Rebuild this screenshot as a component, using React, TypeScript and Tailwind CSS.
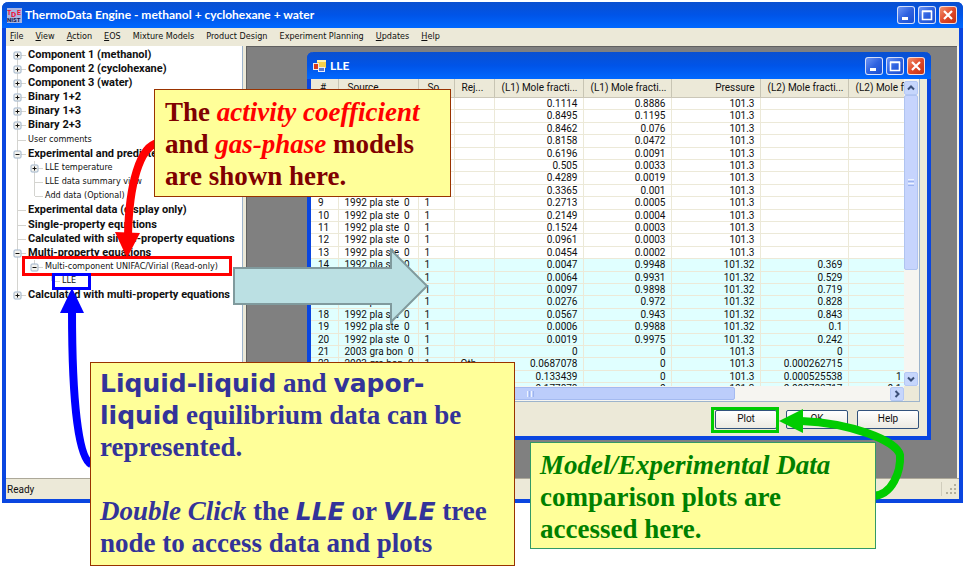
import { useState } from 'react';
import clsx from 'clsx';

interface TreeItem {
    label: string;
    level: number;
    bold?: boolean;
    box?: 'plus' | 'minus';
    lines: string[];
}

interface WindowButtonProps {
    type: 'minimize' | 'maximize' | 'close';
    label: string;
}

// one entry of "lines" per indent column: start, full, tee, end, none
const treeItems: TreeItem[] = [
    { label: 'Component 1 (methanol)', level: 0, bold: true, box: 'plus', lines: ['start'] },
    { label: 'Component 2 (cyclohexane)', level: 0, bold: true, box: 'plus', lines: ['tee'] },
    { label: 'Component 3 (water)', level: 0, bold: true, box: 'plus', lines: ['tee'] },
    { label: 'Binary 1+2', level: 0, bold: true, box: 'plus', lines: ['tee'] },
    { label: 'Binary 1+3', level: 0, bold: true, box: 'plus', lines: ['tee'] },
    { label: 'Binary 2+3', level: 0, bold: true, box: 'plus', lines: ['tee'] },
    { label: 'User comments', level: 0, lines: ['tee'] },
    { label: 'Experimental and predicted data', level: 0, bold: true, box: 'minus', lines: ['tee'] },
    { label: 'LLE temperature', level: 1, box: 'plus', lines: ['full', 'tee'] },
    { label: 'LLE data summary view', level: 1, lines: ['full', 'tee'] },
    { label: 'Add data (Optional)', level: 1, lines: ['full', 'end'] },
    { label: 'Experimental data (display only)', level: 0, bold: true, lines: ['tee'] },
    { label: 'Single-property equations', level: 0, bold: true, lines: ['tee'] },
    { label: 'Calculated with single-property equations', level: 0, bold: true, lines: ['tee'] },
    { label: 'Multi-property equations', level: 0, bold: true, box: 'minus', lines: ['tee'] },
    { label: 'Multi-component UNIFAC/Virial (Read-only)', level: 1, box: 'minus', lines: ['full', 'end'] },
    { label: 'LLE', level: 2, lines: ['full', 'none', 'end'] },
    { label: 'Calculated with multi-property equations', level: 0, bold: true, box: 'plus', lines: ['end'] },
];

const menuItems = [
    { key: 'F', rest: 'ile' },
    { key: 'V', rest: 'iew' },
    { key: 'A', rest: 'ction' },
    { key: 'E', rest: 'OS' },
    { key: '', rest: 'Mixture Models' },
    { key: '', rest: 'Product Design' },
    { key: '', rest: 'Experiment Planning' },
    { key: 'U', rest: 'pdates' },
    { key: 'H', rest: 'elp' },
];

// source, set, rejected, L1, L1, pressure, L2, L2
const rows = [
    ['1992 pla ste  0', '1', '', '0.1114', '0.8886', '101.3', '', ''],
    ['1992 pla ste  0', '1', '', '0.8495', '0.1195', '101.3', '', ''],
    ['1992 pla ste  0', '1', '', '0.8462', '0.076', '101.3', '', ''],
    ['1992 pla ste  0', '1', '', '0.8158', '0.0472', '101.3', '', ''],
    ['1992 pla ste  0', '1', '', '0.6196', '0.0091', '101.3', '', ''],
    ['1992 pla ste  0', '1', '', '0.505', '0.0033', '101.3', '', ''],
    ['1992 pla ste  0', '1', '', '0.4289', '0.0019', '101.3', '', ''],
    ['1992 pla ste  0', '1', '', '0.3365', '0.001', '101.3', '', ''],
    ['1992 pla ste  0', '1', '', '0.2713', '0.0005', '101.3', '', ''],
    ['1992 pla ste  0', '1', '', '0.2149', '0.0004', '101.3', '', ''],
    ['1992 pla ste  0', '1', '', '0.1524', '0.0003', '101.3', '', ''],
    ['1992 pla ste  0', '1', '', '0.0961', '0.0003', '101.3', '', ''],
    ['1992 pla ste  0', '1', '', '0.0454', '0.0002', '101.3', '', ''],
    ['1992 pla ste  0', '1', '', '0.0047', '0.9948', '101.32', '0.369', ''],
    ['1992 pla ste  0', '1', '', '0.0064', '0.9931', '101.32', '0.529', ''],
    ['1992 pla ste  0', '1', '', '0.0097', '0.9898', '101.32', '0.719', ''],
    ['1992 pla ste  0', '1', '', '0.0276', '0.972', '101.32', '0.828', ''],
    ['1992 pla ste  0', '1', '', '0.0567', '0.943', '101.32', '0.843', ''],
    ['1992 pla ste  0', '1', '', '0.0006', '0.9988', '101.32', '0.1', ''],
    ['1992 pla ste  0', '1', '', '0.0019', '0.9975', '101.32', '0.242', ''],
    ['2003 gra bon  0', '1', '', '0', '0', '101.3', '0', ''],
    ['2003 gra bon  0', '1', 'Oth...', '0.0687078', '0', '101.3', '0.000262715', ''],
    ['2003 gra bon  0', '1', 'Oth...', '0.133439', '0', '101.3', '0.000525538', '1'],
    ['2003 gra bon  0', '1', 'Oth...', '0.177878', '0', '101.3', '0.000788717', '0.1'],
];

const columns = [
    { title: '#', className: 'w-[27px] pl-[9px]' },
    { title: 'Source', className: 'w-20 pl-[9px]' },
    { title: 'So...', className: 'w-9 pl-[9px]' },
    { title: 'Rej...', className: 'w-10 pl-[7px]' },
    { title: '(L1) Mole fracti...', className: 'w-[89px] pl-[7px]' },
    { title: '(L1) Mole fracti...', className: 'w-[88px] pl-[7px]' },
    { title: 'Pressure', className: 'w-[89px] pr-[5px] text-right' },
    { title: '(L2) Mole fracti...', className: 'w-[88px] pl-[7px]' },
    { title: '(L2) Mole fracti...', className: 'w-[88px] pl-[7px]' },
];

function WindowButton({ type, label }: WindowButtonProps) {
    return (
        <button
            aria-label={label}
            className={clsx(
                'flex size-[18px] items-center justify-center rounded-[3px] border border-white/80',
                type === 'close'
                    ? 'bg-linear-to-br from-[#f0906c] via-[#e0492a] to-[#c43010]'
                    : 'bg-linear-to-br from-[#6d94f5] via-[#2f62e0] to-[#1a4ed0]'
            )}
        >
            <svg viewBox="0 0 16 16" className="size-4" fill="none" stroke="white">
                {type === 'minimize' && <path d="M4 11.5h6" strokeWidth="3" />}
                {type === 'maximize' && <path d="M3.5 4.5h9v8h-9zM3 4h10" strokeWidth="1.6" />}
                {type === 'close' && <path d="M4 4l8 8M12 4l-8 8" strokeWidth="2.2" />}
            </svg>
        </button>
    );
}

function WindowButtons() {
    return (
        <div className="flex gap-[3px]">
            <WindowButton type="minimize" label="Minimize" />
            <WindowButton type="maximize" label="Maximize" />
            <WindowButton type="close" label="Close" />
        </div>
    );
}

function TreeCell({ line, box }: { line: string; box?: 'plus' | 'minus' }) {
    return (
        <svg width="17" height="15" className="shrink-0 overflow-visible" fill="none">
            <g stroke="#d4d4d0" strokeWidth="1">
                {(line === 'full' || line === 'tee') && <path d="M8.5 0v15" />}
                {line === 'start' && <path d="M8.5 7v8" />}
                {line === 'end' && <path d="M8.5 0v7" />}
                {line !== 'full' && line !== 'none' && <path d="M9 7.5h8" />}
            </g>
            {box && (
                <>
                    <rect x="5" y="4" width="7" height="7" rx="1" fill="#f4f3ee" stroke="#9db2ca" />
                    <path d={box === 'plus' ? 'M6.5 7.5h4M8.5 5.5v4' : 'M6.5 7.5h4'} stroke="#101010" />
                </>
            )}
        </svg>
    );
}

function Tree() {
    return (
        <ul className="w-[237px] shrink-0 overflow-hidden border-r border-[#9db4cc] bg-white pt-0.5 pl-[3px]">
            {treeItems.map((item) => (
                <li
                    key={item.label}
                    className={clsx(
                        'flex h-[14px] items-center whitespace-nowrap text-[#101010] nth-[6n]:h-[15px]',
                        item.bold ? 'text-[11px] font-bold' : "font-['DejaVu_Sans_Condensed','Roboto',sans-serif] text-[9px]"
                    )}
                >
                    {item.lines.map((line, i) => (
                        <TreeCell key={i} line={line} box={i === item.level ? item.box : undefined} />
                    ))}
                    <span className="pl-0.5">{item.label}</span>
                </li>
            ))}
        </ul>
    );
}

function ScrollArrow({ d, label }: { d: string; label: string }) {
    return (
        <button
            aria-label={label}
            className="flex size-[14px] shrink-0 items-center justify-center rounded-[2px] border border-[#b4c8f4] bg-[#c6d6fc]"
        >
            <svg viewBox="0 0 10 10" className="size-[10px]" fill="none" stroke="#3c5078" strokeWidth="2">
                <path d={d} />
            </svg>
        </button>
    );
}

function DataTable() {
    return (
        <table className="w-[625px] table-fixed border-collapse text-[10px] leading-[11px] text-[#101010]">
            <thead>
                <tr className="h-[18px] bg-[#ece9d8]">
                    {columns.map((col, i) => (
                        <th
                            key={i}
                            className={clsx(
                                'overflow-hidden border-r border-b border-r-[#c8c5b4] border-b-[#cbc7b8] p-0 text-left font-normal whitespace-nowrap',
                                col.className
                            )}
                        >
                            {col.title}
                        </th>
                    ))}
                </tr>
            </thead>
            <tbody>
                {rows.map((row, i) => (
                    <tr
                        key={i}
                        className={clsx('h-3 nth-[5n+2]:h-[13px] nth-[5n+4]:h-[13px]', i < 13 ? 'bg-white' : 'bg-[#e0ffff]')}
                    >
                        <td className="border-r border-b border-[#ece9d8] p-0 pl-[7px]">{i + 1}</td>
                        {row.map((cell, j) => (
                            <td
                                key={j}
                                className={clsx(
                                    'overflow-hidden border-r border-b border-[#ece9d8] p-0 whitespace-pre',
                                    j < 3 && 'pl-[6px]',
                                    j >= 3 && j < 7 && 'pr-[5px] text-right',
                                    j === 7 && 'pr-[34px] text-right'
                                )}
                            >
                                {cell}
                            </td>
                        ))}
                    </tr>
                ))}
            </tbody>
        </table>
    );
}

function DialogButton({ label }: { label: string }) {
    return (
        <button className="h-[19px] w-[62px] rounded-[2px] border border-[#31527c] bg-linear-to-b from-white to-[#eceae2] text-[10px] leading-none text-[#101010]">
            {label}
        </button>
    );
}

function LleWindow({ onClose }: { onClose?: () => void }) {
    return (
        <section className="absolute top-[5px] left-[60px] flex h-[388px] w-[624px] flex-col rounded-t-md border-x-4 border-b-4 border-[#0a46e0] bg-[#ece9d8]">
            <header
                onDoubleClick={onClose}
                className="-mx-1 flex h-[27px] shrink-0 items-center rounded-t-md bg-linear-to-b from-[#0a50d0] via-[#0054e8] to-[#0068ff] pr-1.5 pl-1.5"
            >
                <svg viewBox="0 0 13 13" className="size-[13px]">
                    <rect x="4" y="1" width="9" height="8" fill="#f6d04c" />
                    <rect x="4" y="1" width="9" height="2" fill="#fdf0b0" />
                    <rect x="0" y="4" width="6" height="7" fill="#f0e8e8" />
                    <rect x="1" y="5" width="4" height="5" fill="#d43a1c" />
                    <rect x="5" y="8" width="7" height="5" fill="#e8ecf8" />
                    <rect x="6" y="9" width="5" height="3" fill="#5878d0" />
                </svg>
                <h2 className="flex-1 pl-1 font-['Lato',sans-serif] text-xs font-bold text-white">LLE</h2>
                <WindowButtons />
            </header>
            <div className="mr-[7px] flex min-h-0 flex-1 flex-col border-r border-b border-[#9db4cc]">
                <div className="flex min-h-0 flex-1">
                    <div className="min-w-0 flex-1 overflow-hidden bg-white">
                        <DataTable />
                    </div>
                    <div className="flex w-[15px] shrink-0 flex-col bg-[#f6f5f1] pt-0.5">
                        <ScrollArrow d="M2 6.5l3-3 3 3" label="Scroll up" />
                        <div className="flex h-[175px] w-[14px] flex-col items-center justify-center gap-px rounded-[2px] border border-[#b0c4f0] bg-[#c6d4fd]">
                            <i className="h-px w-1.5 bg-[#eef4fe]" />
                            <i className="h-px w-1.5 bg-[#9cb4ee]" />
                            <i className="h-px w-1.5 bg-[#eef4fe]" />
                            <i className="h-px w-1.5 bg-[#9cb4ee]" />
                        </div>
                        <div className="flex-1" />
                        <ScrollArrow d="M2 3.5l3 3 3-3" label="Scroll down" />
                    </div>
                </div>
                <div className="flex h-[15px] shrink-0 items-center bg-[#f6f5f1]">
                    <ScrollArrow d="M6.5 2l-3 3 3 3" label="Scroll left" />
                    <div className="flex h-[13px] w-[410px] items-center justify-center gap-px rounded-[2px] border border-[#a4baf0] bg-[#bccdfb]">
                        <i className="h-1.5 w-px bg-[#eef4fe]" />
                        <i className="h-1.5 w-px bg-[#9cb4ee]" />
                        <i className="h-1.5 w-px bg-[#eef4fe]" />
                        <i className="h-1.5 w-px bg-[#9cb4ee]" />
                    </div>
                    <div className="flex-1" />
                    <ScrollArrow d="M3.5 2l3 3-3 3" label="Scroll right" />
                    <div className="h-full w-[15px] bg-[#ece9d8]" />
                </div>
            </div>
            <footer className="flex h-[34px] shrink-0 items-center justify-end gap-[9px] pr-2">
                <DialogButton label="Plot" />
                <DialogButton label="OK" />
                <DialogButton label="Help" />
            </footer>
        </section>
    );
}

function Arrows() {
    return (
        <svg width="965" height="568" className="pointer-events-none absolute top-0 left-0" fill="none">
            {/* tree to data window */}
            <path
                d="M234 268H391V250L427 286L391 322V304H234Z"
                fill="#bbe0e3"
                stroke="#809a9d"
                strokeWidth="2"
            />
            {/* model node */}
            <path d="M158 143C140 146 129 184 128 236" stroke="#ff0000" strokeWidth="8" />
            <path d="M115 232L140 233L127 258Z" fill="#ff0000" />
            {/* LLE node */}
            <path d="M72 310C72 400 78 458 91 464" stroke="#0000ff" strokeWidth="8" />
            <path d="M60 313H84L72 288Z" fill="#0000ff" />
            {/* plot button */}
            <path d="M801 421C850 423 896 440 900 455C901 470 893 496 872 496" stroke="#00cc00" strokeWidth="8" />
            <path d="M779 421L803 409V433Z" fill="#00cc00" />
        </svg>
    );
}

export default function App() {
    const [lleOpen, setLleOpen] = useState(true);

    return (
        <main className="relative flex min-h-screen flex-col bg-white px-0.5 pt-0.5 pb-[65px] font-['Roboto',Arial,sans-serif]">
            <div className="flex flex-1 flex-col rounded-t-md border-x-4 border-b-4 border-[#0a46e0] bg-[#ece9d8]">
                <header className="-mx-1 flex h-[26px] shrink-0 items-center rounded-t-md bg-linear-to-b from-[#0a50d0] via-[#0054e8] to-[#0068ff] pr-1.5 pl-[5px]">
                    <svg viewBox="0 0 15 15" className="size-[15px]">
                        <rect width="15" height="15" fill="#a9b4e0" />
                        <text x="0" y="7" fontSize="7" fontWeight="bold" fill="#f01030">T</text>
                        <text x="4" y="9" fontSize="8" fontWeight="bold" fill="#f01030">D</text>
                        <text x="10" y="7" fontSize="7" fontWeight="bold" fill="#f01030">E</text>
                        <text x="0" y="14" fontSize="6" fontWeight="bold" fill="#101040">NIST</text>
                    </svg>
                    <h1 className="flex-1 pl-[3px] font-['Lato',sans-serif] text-xs font-bold whitespace-nowrap text-white">
                        ThermoData Engine - methanol + cyclohexane + water
                    </h1>
                    <WindowButtons />
                </header>

                <nav className="flex h-[18px] shrink-0 items-center gap-3 pl-1 font-['DejaVu_Sans_Condensed','Roboto',sans-serif] text-[9px] whitespace-nowrap text-[#101010]">
                    {menuItems.map((item) => (
                        <button key={item.key + item.rest}>
                            <u>{item.key}</u>
                            {item.rest}
                        </button>
                    ))}
                </nav>

                <div className="flex flex-1">
                    <Tree />
                    <div className="w-[3px] shrink-0 bg-[#ece9d8]" />
                    <div className="relative min-h-[432px] flex-1 border-t border-l border-[#606060] bg-[#808080]">
                        {lleOpen && <LleWindow onClose={() => setLleOpen(false)} />}
                    </div>
                    <div className="w-0.5 bg-[#f4f2e8]" />
                </div>

                <footer className="flex h-[21px] shrink-0 items-center border-t border-[#aca899] pl-px text-[10px] text-[#101010]">
                    <span className="flex-1">Ready</span>
                    <span className="h-3.5 w-1 border-l border-[#d0cdbc]" />
                    <svg width="12" height="12" className="mr-0.5" fill="#b4b09c">
                        <path d="M9 1h2v2h-2zM9 5h2v2h-2zM5 5h2v2h-2zM9 9h2v2h-2zM5 9h2v2h-2zM1 9h2v2h-2z" />
                    </svg>
                </footer>
            </div>

            {/* Highlight frames */}
            <div className="absolute top-64 left-[22px] h-5 w-[210px] border-3 border-[#ff0000]" />
            <div className="absolute top-[273px] left-[52px] h-[17px] w-[39px] border-3 border-[#0000ff]" />
            <div className="absolute top-[407px] left-[711px] h-[26px] w-[68px] border-3 border-[#00cc00]" />

            <Arrows />

            {/* Callouts */}
            <aside className="absolute top-[89px] left-[154px] h-[108px] w-[297px] border border-[#993300] bg-[#ffff99] px-[10px] py-1.5 font-['Liberation_Serif',serif] text-[27px] leading-8 font-bold whitespace-nowrap text-[#800000]">
                The <em className="text-[#ff0000]">activity coefficient</em>
                <br />
                and <em className="text-[#ff0000]">gas-phase</em> models
                <br />
                are shown here.
            </aside>
            <aside className="absolute top-[362px] left-[90px] h-[204px] w-[425px] border border-[#993300] bg-[#ffff99] px-[9px] py-1 font-['Liberation_Serif',serif] text-[27px] leading-8 font-bold whitespace-nowrap text-[#333399]">
                <p>
                    <b className="font-['DejaVu_Sans',sans-serif] text-[25px] leading-none">Liquid-liquid</b> and{' '}
                    <b className="font-['DejaVu_Sans',sans-serif] text-[25px] leading-none">vapor-</b>
                    <br />
                    <b className="font-['DejaVu_Sans',sans-serif] text-[25px] leading-none">liquid</b> equilibrium data can be
                    <br />
                    represented.
                </p>
                <p className="pt-8">
                    <em>Double Click</em> the{' '}
                    <em className="font-['DejaVu_Sans',sans-serif] text-[25px] leading-none">LLE</em> or{' '}
                    <em className="font-['DejaVu_Sans',sans-serif] text-[25px] leading-none">VLE</em> tree
                    <br />
                    node to access data and plots
                </p>
            </aside>
            <aside className="absolute top-[442px] left-[530px] h-[107px] w-[346px] border border-[#339966] bg-[#ffff99] px-[9px] py-1.5 font-['Liberation_Serif',serif] text-[27px] leading-8 font-bold whitespace-nowrap text-[#008000]">
                <em>Model/Experimental Data</em>
                <br />
                comparison plots are
                <br />
                accessed here.
            </aside>
        </main>
    );
}
